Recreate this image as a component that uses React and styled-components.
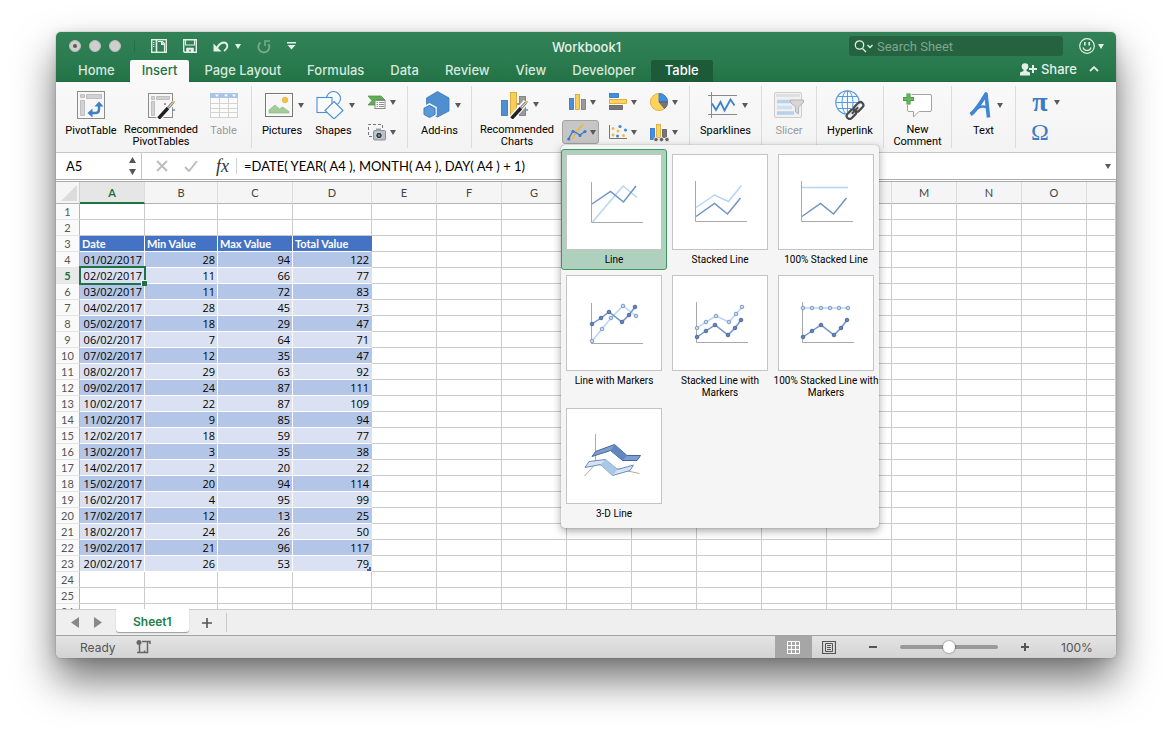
import React, { useState } from 'react';
import styled, { createGlobalStyle, css } from 'styled-components';

const GlobalStyle = createGlobalStyle`
  * {
    box-sizing: border-box;
  }
  body {
    margin: 0;
    background: #fff;
    font-family: Inter, Roboto, sans-serif;
    font-size: 11px;
    color: #000;
  }
  button, input {
    font: inherit;
    color: inherit;
    border: 0;
    padding: 0;
    background: none;
  }
  svg {
    display: block;
    flex: none;
  }
`;

/* ---------- data ---------- */

const tabs = ['Home', 'Insert', 'Page Layout', 'Formulas', 'Data', 'Review', 'View', 'Developer', 'Table'];

/* the last column has no name or width: it fills what is left of the sheet */
const columns = [
  ['A', 65], ['B', 73], ['C', 75], ['D', 79], ['E', 65], ['F', 65], ['G', 65], ['H', 65], ['I', 65], ['J', 65],
  ['K', 65], ['L', 65], ['M', 65], ['N', 65], ['O', 65], [''],
];

const headings = ['Date', 'Min Value', 'Max Value', 'Total Value'];

const values = [
  [28, 94], [11, 66], [11, 72], [28, 45], [18, 29], [7, 64], [12, 35], [29, 63], [24, 87], [22, 87],
  [9, 85], [18, 59], [3, 35], [2, 20], [20, 94], [4, 95], [12, 13], [24, 26], [21, 96], [26, 53],
];

const records = values.map(([min, max], i) => [
  `${String(i + 1).padStart(2, '0')}/02/2017`, min, max, min + max,
]);

const rowNumbers = Array.from({ length: 26 }, (_, i) => i + 1);

const lineCharts = [
  {
    name: 'Line',
    axis: 'M25.5 28V68.5H77',
    light: [[26.5, 68], [57, 32], [71, 43.5]],
    dark: [[26, 50], [44.5, 37.5], [57.5, 48], [70, 32]],
  },
  {
    name: 'Stacked Line',
    axis: 'M23.5 27V67.5H75',
    light: [[24, 53.5], [42.5, 41], [56.5, 47.5], [69.5, 31.5]],
    dark: [[24, 62.5], [42.5, 49.5], [55.5, 60], [68.5, 44]],
  },
  {
    name: '100% Stacked Line',
    axis: 'M23.5 27V67.5H75',
    light: [[24, 33.5], [70, 33.5]],
    dark: [[24, 62.5], [42.5, 49.5], [55.5, 60], [68.5, 44]],
  },
  {
    name: 'Line with Markers',
    markers: true,
    axis: 'M25.5 28V68.5H77',
    light: [[26, 66], [36, 54], [45, 43], [57, 31], [70, 41]],
    dark: [[26, 49], [35, 43], [43, 37], [56, 47], [63, 40], [69, 32]],
  },
  {
    name: 'Stacked Line with Markers',
    markers: true,
    axis: 'M24.5 27V67.5H76',
    light: [[25, 53], [34, 47], [44, 41], [57, 47], [64, 39], [70, 32]],
    dark: [[25, 62], [34, 56], [43, 50], [56, 60], [63, 53], [69, 45]],
  },
  {
    name: '100% Stacked Line with Markers',
    markers: true,
    axis: 'M24.5 27V67.5H76',
    light: [[25, 33], [34, 33], [43, 33], [52, 33], [61, 33], [70, 33]],
    dark: [[25, 62], [34, 56], [43, 50], [56, 60], [63, 53], [69, 45]],
  },
  { name: '3-D Line', solid: true },
];

/* ---------- icons ---------- */

const Caret = ({ color = '#5a5a5a' }) => (
  <svg width="6" height="5" viewBox="0 0 6 5"><path d="M0 0H6L3 5Z" fill={color} /></svg>
);

const Wand = () => (
  <g>
    <path d="M10 29L25 12" stroke="#fff" strokeWidth="6" />
    <path d="M10.5 28.5L20 18" stroke="#222" strokeWidth="3.4" />
    <path d="M20 18L25 12.5" stroke="#888" strokeWidth="3" />
    <path d="M20.5 17.5L25 12.5" stroke="#eee" strokeWidth="1" />
    <rect x="16" y="13" width="2" height="2" fill="#e07a7a" />
    <rect x="25" y="11" width="2" height="2" fill="#f0bd45" />
    <rect x="25" y="19" width="2" height="2" fill="#7aa9e0" />
  </g>
);

const PivotIcon = () => (
  <svg width="28" height="28" viewBox="0 0 28 28" fill="none">
    <rect x="0.5" y="0.5" width="27" height="27" fill="#f7f7f7" stroke="#8c8c8c" />
    <path d="M3.5 3.5H7.5V6.5H3.5ZM9.5 3.5H24.5V7.5H9.5ZM3.5 9.5H7.5V24.5H3.5Z" fill="#d2d2d2" stroke="#b5b5b5" strokeWidth="0.8" />
    <path d="M14 22H18.5Q22 22 22 18.5V15" stroke="#3f7fc4" strokeWidth="2.4" />
    <path d="M10.5 22L15.5 17.5V26.5ZM22 10.5L17.5 15.5H26.5Z" fill="#3f7fc4" />
  </svg>
);

const PivotWandIcon = () => (
  <svg width="28" height="28" viewBox="0 0 28 28" fill="none">
    <rect x="1.5" y="2.5" width="24" height="24" fill="#f7f7f7" stroke="#8c8c8c" />
    <path d="M4.5 5.5H7.5V8.5H4.5ZM9.5 5.5H22.5V8.5H9.5ZM4.5 10.5H7.5V24.5H4.5Z" fill="#d2d2d2" stroke="#b5b5b5" strokeWidth="0.8" />
    <g transform="translate(1 -1)"><Wand /></g>
  </svg>
);

const TableIcon = () => (
  <svg width="28" height="28" viewBox="0 0 28 28" fill="none">
    <rect x="0.5" y="2.5" width="27" height="24" fill="#fbfbfb" stroke="#d3d3d3" />
    <rect y="2" width="28" height="5" fill="#a9c4e6" />
    <path d="M5 3.5H9L7 6ZM14 3.5H18L16 6ZM22 3.5H26L24 6Z" fill="#fff" />
    <path d="M0 12.5H28M0 17.5H28M0 21.5H28M9.5 7V26M18.5 7V26" stroke="#d3d3d3" />
  </svg>
);

const PictureIcon = () => (
  <svg width="28" height="28" viewBox="0 0 28 28" fill="none">
    <rect x="0.5" y="2.5" width="27" height="23" fill="#fff" stroke="#777" />
    <rect x="2" y="4" width="24" height="20" fill="#f7f7f7" />
    <circle cx="20" cy="9" r="2.8" fill="#f3c246" stroke="#dba72c" strokeWidth="0.6" />
    <path d="M4 22V19L10 14L14.5 18L17.5 16L24 20.5V22Z" fill="#a4cc98" stroke="#7db572" strokeWidth="0.6" />
  </svg>
);

const ShapesIcon = () => (
  <svg width="28" height="28" viewBox="0 0 28 28" fill="#fbfbfb" stroke="#4a90d9" strokeWidth="1.1">
    <circle cx="17.5" cy="7.5" r="7" />
    <rect x="1" y="6.5" width="15" height="15" />
    <path d="M18 10.5L27 19.5L18 28L9 19.5Z" />
  </svg>
);

const SmartArtIcon = () => (
  <svg width="20" height="16" viewBox="0 0 20 16" fill="none">
    <path d="M1 2H14L18 6H9V11H1L5 6.5Z" fill="#5fae55" stroke="#3f9440" strokeWidth="0.7" />
    <rect x="8" y="6.5" width="10" height="8" fill="#fff" stroke="#888" />
    <path d="M12 8.5H17M12 10.5H17M12 12.5H17M9.5 8.5H11M9.5 10.5H11M9.5 12.5H11" stroke="#777" strokeWidth="0.8" />
  </svg>
);

const ScreenshotIcon = () => (
  <svg width="20" height="18" viewBox="0 0 20 18" fill="none">
    <path d="M5 13.5H1.5V1.5H15.5V5" stroke="#777" strokeDasharray="3 2" />
    <rect x="6.5" y="7.5" width="12" height="9.5" rx="1" fill="#b9bfc8" stroke="#8a8f98" />
    <rect x="9" y="5.5" width="5" height="2.5" fill="#9aa0a8" />
    <circle cx="12" cy="12.5" r="3.2" fill="#333" stroke="#eee" strokeWidth="0.8" />
    <circle cx="12" cy="12.5" r="1.2" fill="#6f93bd" />
  </svg>
);

const AddinsIcon = () => (
  <svg width="28" height="28" viewBox="0 0 28 28" stroke="#3a78bd" strokeWidth="0.8">
    <path d="M15.5 0.5L27 7V20L15.5 26L4.5 20V7Z" fill="#4f8fd0" />
    <path d="M7.5 13L14 16.5V24L7.5 27.5L1 24V16.5Z" fill="#4f8fd0" stroke="#f4f4f4" strokeWidth="1.6" />
    <path d="M7.5 14.5L13 17.5V23.5L7.5 26.5L2 23.5V17.5Z" fill="#5b9ad8" />
  </svg>
);

const ChartWandIcon = () => (
  <svg width="28" height="28" viewBox="0 0 28 28" fill="none" strokeWidth="0.8">
    <rect x="1.5" y="9.5" width="6" height="15" fill="#4f8fd0" stroke="#3a72b0" />
    <rect x="10.5" y="1.5" width="6" height="23" fill="#f7cf57" stroke="#cfa02c" />
    <rect x="19.5" y="5.5" width="6" height="19" fill="#9a9a9a" stroke="#777" />
    <g transform="translate(1 -1)"><Wand /></g>
  </svg>
);

const ColumnIcon = () => (
  <svg width="20" height="18" viewBox="0 0 20 18" strokeWidth="0.8">
    <rect x="2.5" y="5.5" width="4" height="11" fill="#4f8fd0" stroke="#3a72b0" />
    <rect x="8.5" y="1.5" width="4" height="15" fill="#f7cf57" stroke="#cfa02c" />
    <rect x="14.5" y="6.5" width="4" height="10" fill="#9a9a9a" stroke="#777" />
  </svg>
);

const BarIcon = () => (
  <svg width="20" height="18" viewBox="0 0 20 18" strokeWidth="0.8">
    <rect x="1.5" y="0.5" width="9" height="4" fill="#418ee6" stroke="#2e72c0" />
    <rect x="1.5" y="6.5" width="17" height="4" fill="#ffd25c" stroke="#d9a62e" />
    <rect x="1.5" y="12.5" width="13" height="4" fill="#777" stroke="#5c5c5c" />
  </svg>
);

const PieIcon = () => (
  <svg width="20" height="18" viewBox="0 0 20 18" strokeWidth="0.8">
    <circle cx="10" cy="9" r="8.6" fill="#ffd25c" stroke="#d9a62e" />
    <path d="M10 9V0.4A8.6 8.6 0 0 1 18.6 9Z" fill="#418ee6" stroke="#2e72c0" />
    <path d="M10 9H18.6A8.6 8.6 0 0 1 15.5 15.6Z" fill="#777" stroke="#5c5c5c" />
  </svg>
);

const LineIcon = () => (
  <svg width="20" height="18" viewBox="0 0 20 18" fill="none">
    <path d="M6 14.5L10 8L15.5 2" stroke="#e0b040" strokeWidth="1.2" />
    <path d="M1.5 16L6 8L13 12L18 8.5" stroke="#3a7bc8" strokeWidth="1.4" />
    <g fill="#f0bf48"><circle cx="6" cy="14.5" r="1.4" /><circle cx="10" cy="7.5" r="1.4" /><circle cx="15.5" cy="2" r="1.5" /></g>
    <g fill="#3a7bc8"><circle cx="1.8" cy="16" r="1.6" /><circle cx="6" cy="8.5" r="1.5" /><circle cx="13" cy="12.5" r="1.5" /><circle cx="18" cy="8.5" r="1.6" /></g>
  </svg>
);

const ScatterIcon = () => (
  <svg width="20" height="18" viewBox="0 0 20 18" fill="none">
    <path d="M1.5 2V15.5H19" stroke="#777" />
    <g fill="#eebd48"><circle cx="5" cy="5.5" r="1.5" /><circle cx="10" cy="8" r="1.5" /><circle cx="5" cy="12" r="1.5" /><circle cx="15.5" cy="12.5" r="1.5" /></g>
    <g fill="#4387d6"><circle cx="12" cy="3.5" r="1.6" /><circle cx="17.5" cy="7" r="1.6" /><circle cx="9.5" cy="13" r="1.5" /></g>
  </svg>
);

const ComboIcon = () => (
  <svg width="20" height="20" viewBox="0 0 20 20" strokeWidth="0.8">
    <rect x="1.5" y="6.5" width="4" height="11" fill="#418ee6" stroke="#2e72c0" />
    <rect x="7.5" y="2.5" width="4" height="13" fill="#ffd25c" stroke="#d9a62e" />
    <rect x="13.5" y="7.5" width="4" height="8" fill="#777" stroke="#5c5c5c" />
    <g fill="#666" stroke="#f4f4f4"><circle cx="7" cy="17.5" r="2.2" /><circle cx="12.5" cy="17.5" r="2.2" /><circle cx="18" cy="17.5" r="2.2" /></g>
  </svg>
);

const SparkIcon = () => (
  <svg width="29" height="28" viewBox="0 0 29 28" fill="none">
    <path d="M3.5 1V27M0 4.5H29M0 23.5H29" stroke="#8a8a8a" />
    <path d="M4 12.5L8 19L12.5 11L16.5 19.5L22.5 8.5L26.5 14.5" stroke="#3b82cc" strokeWidth="1.8" />
  </svg>
);

const SlicerIcon = () => (
  <svg width="30" height="28" viewBox="0 0 30 28" fill="none">
    <rect x="0.5" y="1.5" width="27" height="25" rx="1.5" fill="#f1f1f1" stroke="#cdcdcd" />
    <path d="M2 3H26V6H2Z" fill="#e0e0e0" />
    <path d="M3 10.5H20M3 22H20" stroke="#b9d0ec" strokeWidth="3.5" />
    <path d="M3 16.5H18" stroke="#cfdff2" strokeWidth="3.5" />
    <path d="M16.5 9H29.5V11.5L24.5 16V23L21.5 21V16L16.5 11.5Z" fill="#d6d6d6" stroke="#b4b4b4" />
  </svg>
);

const LinkIcon = () => (
  <svg width="30" height="30" viewBox="0 0 30 30" fill="none">
    <circle cx="12.5" cy="12.5" r="11.7" fill="#f3f9ff" stroke="#5b9ce0" strokeWidth="1.2" />
    <ellipse cx="12.5" cy="12.5" rx="5.5" ry="11.7" stroke="#5b9ce0" />
    <path d="M12.5 1V24M1 12.5H24M3 6.5H22M3 18.5H22" stroke="#5b9ce0" />
    <g transform="translate(20 20.5) rotate(-45)">
      <path d="M-12 -4H12V4H-12Z" fill="#f5f5f5" opacity="0.8" />
      <rect x="-10.5" y="-3" width="11" height="6" rx="3" stroke="#4a4a4a" strokeWidth="2.2" />
      <rect x="-0.5" y="-3" width="11" height="6" rx="3" stroke="#4a4a4a" strokeWidth="2.2" />
      <path d="M-4.5 0H4.5" stroke="#4a4a4a" strokeWidth="2" />
    </g>
  </svg>
);

const CommentIcon = () => (
  <svg width="30" height="28" viewBox="0 0 30 28" fill="none">
    <path d="M6 3.5H27Q28.5 3.5 28.5 5V19Q28.5 20.5 27 20.5H16L10.5 26V20.5H6Q4.5 20.5 4.5 19V5Q4.5 3.5 6 3.5Z" fill="#fff" stroke="#a3a3a3" />
    <path d="M5.5 1V14M-1 7.5H12" stroke="#f5f5f5" strokeWidth="6" />
    <path d="M5.5 2.5V13.5M0 8H11" stroke="#3f9440" strokeWidth="4" />
    <path d="M5.5 3V13M0.5 8H10.5" stroke="#68b85e" strokeWidth="2.4" />
  </svg>
);

const TextIcon = () => (
  <svg width="24" height="28" viewBox="0 0 24 28" fill="none" stroke="#3f86d4" strokeWidth="3.6" strokeLinejoin="round">
    <path d="M2.5 23.5Q8 20 18 3L20.5 26.5" />
    <path d="M9 17.5Q13 14 19.5 16.5" strokeWidth="2.6" />
  </svg>
);

const SidebarIcon = () => (
  <svg width="16" height="14" viewBox="0 0 16 14" fill="none" stroke="#e3f0e8">
    <rect x="0.7" y="0.7" width="14.6" height="12.6" strokeWidth="1.4" />
    <path d="M5.5 1V13" strokeWidth="1.6" />
    <path d="M2 3.5H3.5M2 5.5H3.5M2 7.5H3.5" strokeWidth="0.9" />
    <path d="M7 2.5H11.5L13.5 4.5V13" strokeWidth="1.2" />
    <path d="M10 2V6H14Z" fill="#e3f0e8" stroke="none" />
  </svg>
);

const SaveIcon = () => (
  <svg width="14" height="14" viewBox="0 0 14 14" fill="none" stroke="#e3f0e8">
    <path d="M0.7 0.7H13.3V13.3H1.5L0.7 12.5Z" strokeWidth="1.4" />
    <path d="M2.5 1V6H11.5V1" strokeWidth="1.2" />
    <path d="M3.5 9H10.5V13H8V10.5H6V13H3.5Z" fill="#e3f0e8" strokeWidth="0.6" />
  </svg>
);

const UndoIcon = () => (
  <svg width="16" height="13" viewBox="0 0 16 13" fill="none" stroke="#e3f0e8">
    <path d="M4 8Q7 2.5 11 2.5Q14.5 3 14.3 6.5Q14 9 11 11" strokeWidth="1.9" />
    <path d="M0.5 3.5V11.5H8.5Z" fill="#e3f0e8" stroke="none" />
  </svg>
);

const RedoIcon = () => (
  <svg width="14" height="15" viewBox="0 0 14 15" fill="none" stroke="#78ab8e" strokeWidth="1.8">
    <path d="M3.5 3.5A5.5 5.5 0 1 0 11.5 5" />
    <path d="M8 7V2H13" strokeWidth="1.6" />
  </svg>
);

const CustomizeIcon = () => (
  <svg width="9" height="8" viewBox="0 0 9 8" fill="#e3f0e8"><path d="M0 0H9V1.5H0ZM0.5 3H8.5L4.5 7.5Z" /></svg>
);

const SearchIcon = () => (
  <svg width="19" height="13" viewBox="0 0 19 13" fill="none" stroke="#e3f0e8" strokeWidth="1.3">
    <circle cx="5.5" cy="5" r="4.2" />
    <path d="M8.5 8.5L12 12M13.5 5L16 7.5L18.5 5" />
  </svg>
);

const SmileIcon = () => (
  <svg width="16" height="16" viewBox="0 0 16 16" fill="none" stroke="#e3f0e8" strokeWidth="1.2">
    <circle cx="8" cy="8" r="7.3" />
    <path d="M4 9.5Q5 12.5 8 12.5Q11 12.5 12 9.5" />
    <path d="M5.8 4V7.5M10.2 4V7.5" strokeWidth="1.6" />
  </svg>
);

const ShareIcon = () => (
  <svg width="17" height="13" viewBox="0 0 17 13" fill="#e3f0e8">
    <circle cx="5" cy="3.5" r="3.3" />
    <path d="M3.5 6H6.5V8L10 9.5V12.5H0V9.5L3.5 8Z" />
    <path d="M12 2H14V5H17V7H14V10H12V7H9V5H12Z" />
  </svg>
);

const GridIcon = () => (
  <svg width="13" height="13" viewBox="0 0 13 13" fill="none" stroke="#fff">
    <path d="M0.5 0.5H12.5V12.5H0.5ZM4.5 0V13M8.5 0V13M0 4.5H13M0 8.5H13" />
  </svg>
);

const PageIcon = () => (
  <svg width="14" height="13" viewBox="0 0 14 13" fill="none" stroke="#555">
    <path d="M0.5 0.5H13.5V12.5H0.5Z" strokeWidth="1.2" />
    <path d="M3.5 2.5H10.5V10.5H3.5ZM5 4.5H9M5 6.5H9M5 8.5H9" />
  </svg>
);

const MacroIcon = () => (
  <svg width="15" height="14" viewBox="0 0 15 14" fill="none" stroke="#666" strokeWidth="1.5">
    <circle cx="3" cy="2.5" r="2.5" fill="#666" stroke="none" />
    <path d="M6 1.5H14V4M11.5 2V12.5H8.5M1 12.5H8.5V10.5M3.5 5V12" />
  </svg>
);

const pathOf = (points) => 'M' + points.map((p) => p.join(' ')).join('L');

const ChartPreview = ({ chart }) => {
  if (chart.solid) {
    return (
      <svg width="94" height="94" viewBox="1 1 94 94" strokeLinejoin="round">
        <path d="M29.5 26V56L18.5 68M29.5 56L73.5 65.5" fill="none" stroke="#aaa" />
        <path d="M26 48.5L29.5 43.5L48.5 36.5L61 47.5H74.5L71 52.5H56.5L44.5 42.5Z" fill="#7b9fd2" stroke="#476599" />
        <path d="M48.5 36.5L61 47.5L56.5 52.5L44.5 42.5Z" fill="#5f86bd" />
        <path d="M19 59.5L23 53.5L39.5 51.5L51.5 61.5L67.5 57L64 62.5L46.5 67.5L34.5 56.5Z" fill="#d3e4f6" stroke="#7089b8" />
        <path d="M39.5 51.5L51.5 61.5L46.5 67.5L34.5 56.5Z" fill="#a9c7e6" />
      </svg>
    );
  }
  return (
    <svg width="94" height="94" viewBox="1 1 94 94" fill="none">
      <path d={chart.axis} stroke="#a9a9a9" />
      <path d={pathOf(chart.light)} stroke="#b7d5f2" strokeWidth="1.5" />
      {chart.markers && chart.light.map(([x, y]) => (
        <circle key={x} cx={x} cy={y} r="1.8" fill="#c3dbf5" stroke="#7f9bc6" />
      ))}
      <path d={pathOf(chart.dark)} stroke="#6f93c8" strokeWidth="1.5" />
      {chart.markers && chart.dark.map(([x, y]) => (
        <circle key={x} cx={x} cy={y} r="1.8" fill="#6485bb" stroke="#4c6ba3" />
      ))}
    </svg>
  );
};

/* ---------- app ---------- */

const Tool = ({ icon, label, width, caret, disabled }) => (
  <ToolButton $width={width} disabled={disabled}>
    <IconRow $caret={caret}>
      {icon}
      {caret && <Caret />}
    </IconRow>
    <span>{label}</span>
  </ToolButton>
);

const SmallTool = ({ icon, label, noCaret }) => (
  <SmallButton aria-label={label}>
    {icon}
    {!noCaret && <Caret />}
  </SmallButton>
);

const Ribbon = () => {
  const [chosen, setChosen] = useState('Line');

  return (
    <RibbonBar>
      <Group>
        <Tool width={70} icon={<PivotIcon />} label="PivotTable" />
        <Tool width={70} icon={<PivotWandIcon />} label="Recommended PivotTables" />
        <Tool width={55} icon={<TableIcon />} label="Table" disabled />
      </Group>
      <Group>
        <Tool width={60} icon={<PictureIcon />} label="Pictures" caret />
        <Tool width={43} icon={<ShapesIcon />} label="Shapes" caret />
        <SmallGrid $columns={1}>
          <SmallTool icon={<SmartArtIcon />} label="SmartArt" />
          <SmallTool icon={<ScreenshotIcon />} label="Screenshot" />
        </SmallGrid>
      </Group>
      <Group>
        <Tool width={63} icon={<AddinsIcon />} label="Add-ins" caret />
      </Group>
      <Group>
        <Tool width={90} icon={<ChartWandIcon />} label="Recommended Charts" caret />
        <SmallGrid $columns={3}>
          <SmallTool icon={<ColumnIcon />} label="Column" />
          <SmallTool icon={<BarIcon />} label="Bar" />
          <SmallTool icon={<PieIcon />} label="Pie" />
          <MenuAnchor>
            <SmallButton $active aria-label="Line" aria-expanded="true">
              <LineIcon />
              <Caret />
            </SmallButton>
            <Gallery>
              {lineCharts.map((chart) => (
                <GalleryItem key={chart.name} $selected={chart.name === chosen} onClick={() => setChosen(chart.name)}>
                  <Thumb><ChartPreview chart={chart} /></Thumb>
                  <ChartName>{chart.name}</ChartName>
                </GalleryItem>
              ))}
            </Gallery>
          </MenuAnchor>
          <SmallTool icon={<ScatterIcon />} label="Scatter" />
          <SmallTool icon={<ComboIcon />} label="Combo" />
        </SmallGrid>
      </Group>
      <Group>
        <Tool width={71} icon={<SparkIcon />} label="Sparklines" caret />
      </Group>
      <Group>
        <Tool width={54} icon={<SlicerIcon />} label="Slicer" disabled />
      </Group>
      <Group>
        <Tool width={66} icon={<LinkIcon />} label="Hyperlink" />
      </Group>
      <Group>
        <Tool width={67} icon={<CommentIcon />} label="New Comment" />
      </Group>
      <Group>
        <Tool width={63} icon={<TextIcon />} label="Text" caret />
      </Group>
      <Group>
        <SymbolGrid $columns={1}>
          <SmallTool icon={<Symbol $bold>π</Symbol>} label="Equation" />
          <SmallTool icon={<Symbol>Ω</Symbol>} label="Symbol" noCaret />
        </SymbolGrid>
      </Group>
    </RibbonBar>
  );
};

const Sheet = () => (
  <SheetArea>
    <Grid>
      <colgroup>
        <Col $width={24} />
        {columns.map(([name, width]) => <Col key={name} $width={width} />)}
      </colgroup>
      <thead>
        <tr>
          <Corner aria-label="Select all">
            <svg width="16" height="16" viewBox="0 0 16 16"><path d="M16 0V16H0Z" fill="#dcdcdc" /></svg>
          </Corner>
          {columns.map(([name]) => <ColumnHead key={name} scope="col" $active={name === 'A'}>{name}</ColumnHead>)}
        </tr>
      </thead>
      <tbody>
        {rowNumbers.map((row) => (
          <tr key={row}>
            <RowHead scope="row" $active={row === 5}>{row}</RowHead>
            {columns.map(([name], c) => {
              if (c > 3 || row < 3 || row > 23) return <Cell key={name} />;
              if (row === 3) return <HeadingCell key={name} $last={c === 3}>{headings[c]}</HeadingCell>;
              return (
                <ValueCell key={name} $band={row % 2 === 0} $last={c === 3}>
                  {records[row - 4][c]}
                  {row === 5 && c === 0 && <Selection />}
                  {row === 23 && c === 3 && <TableCorner />}
                </ValueCell>
              );
            })}
          </tr>
        ))}
      </tbody>
    </Grid>
  </SheetArea>
);

const App = () => {
  const [zoom, setZoom] = useState(100);

  return (
    <Desktop>
      <GlobalStyle />
      <Window>
        <header>
          <TitleBar>
            <QuickAccess>
              <Lights><Light $edited /><Light /><Light /></Lights>
              <QuickButton aria-label="Sidebar"><SidebarIcon /></QuickButton>
              <QuickButton aria-label="Save"><SaveIcon /></QuickButton>
              <QuickButton aria-label="Undo"><UndoIcon /><Caret color="#e3f0e8" /></QuickButton>
              <QuickButton aria-label="Redo"><RedoIcon /></QuickButton>
              <QuickButton aria-label="Customize"><CustomizeIcon /></QuickButton>
            </QuickAccess>
            <Title>Workbook1</Title>
            <TitleEnd>
              <SearchBox>
                <SearchIcon />
                <input type="search" aria-label="Search Sheet" placeholder="Search Sheet" />
              </SearchBox>
              <QuickButton aria-label="Feedback" $tight><SmileIcon /><Caret color="#e3f0e8" /></QuickButton>
            </TitleEnd>
          </TitleBar>
          <TabBar>
            {tabs.map((tab) => (
              <Tab key={tab} $active={tab === 'Insert'} $context={tab === 'Table'}>{tab}</Tab>
            ))}
            <ShareButton><ShareIcon />Share</ShareButton>
            <CollapseButton aria-label="Collapse ribbon">
              <svg width="10" height="6" viewBox="0 0 10 6"><path d="M1 5L5 1.2L9 5" fill="none" stroke="#e3f0e8" strokeWidth="1.8" /></svg>
            </CollapseButton>
          </TabBar>
        </header>

        <Ribbon />

        <FormulaBar>
          <NameBox>
            <input aria-label="Name box" defaultValue="A5" />
            <svg width="7" height="18" viewBox="0 0 7 18" fill="#555"><path d="M3.5 0L7 6H0ZM0 12H7L3.5 18Z" /></svg>
          </NameBox>
          <FormulaActions>
            <button aria-label="Cancel">
              <svg width="12" height="12" viewBox="0 0 12 12"><path d="M1 1L11 11M11 1L1 11" stroke="#bdbdbd" strokeWidth="2" /></svg>
            </button>
            <button aria-label="Enter">
              <svg width="14" height="12" viewBox="0 0 14 12"><path d="M1 7L5 11L13 1" fill="none" stroke="#bdbdbd" strokeWidth="2" /></svg>
            </button>
            <Fx aria-label="Insert function">fx</Fx>
          </FormulaActions>
          <FormulaInput aria-label="Formula" defaultValue="=DATE( YEAR( A4 ), MONTH( A4 ), DAY( A4 ) + 1)" />
          <ExpandButton aria-label="Expand formula bar"><Caret /></ExpandButton>
        </FormulaBar>

        <Sheet />

        <SheetBar>
          <SheetNav aria-label="Previous sheet">
            <svg width="8" height="11" viewBox="0 0 8 11"><path d="M8 0V11L0 5.5Z" fill="#888" /></svg>
          </SheetNav>
          <SheetNav aria-label="Next sheet">
            <svg width="8" height="11" viewBox="0 0 8 11"><path d="M0 0V11L8 5.5Z" fill="#888" /></svg>
          </SheetNav>
          <SheetTab>Sheet1</SheetTab>
          <AddSheet aria-label="Add sheet">
            <svg width="10" height="10" viewBox="0 0 10 10"><path d="M5 0V10M0 5H10" stroke="#555" strokeWidth="1.6" /></svg>
          </AddSheet>
        </SheetBar>

        <StatusBar>
          <span>Ready</span>
          <MacroButton aria-label="Record macro"><MacroIcon /></MacroButton>
          <ViewButton $active aria-label="Normal view"><GridIcon /></ViewButton>
          <ViewButton aria-label="Page layout view"><PageIcon /></ViewButton>
          <ZoomButton aria-label="Zoom out" onClick={() => setZoom(zoom - 10)}>
            <svg width="10" height="10" viewBox="0 0 10 10"><path d="M1 5H9" stroke="#555" strokeWidth="2" /></svg>
          </ZoomButton>
          <ZoomSlider type="range" min="0" max="200" value={zoom} aria-label="Zoom" onChange={(e) => setZoom(Number(e.target.value))} />
          <ZoomButton aria-label="Zoom in" onClick={() => setZoom(zoom + 10)}>
            <svg width="10" height="10" viewBox="0 0 10 10"><path d="M1 5H9M5 1V9" stroke="#555" strokeWidth="2" /></svg>
          </ZoomButton>
          <ZoomValue>{zoom}%</ZoomValue>
        </StatusBar>
      </Window>
    </Desktop>
  );
};

export default App;

/* ---------- styles ---------- */

const Desktop = styled.div`
  padding: 32px 56px 80px;
`;

const Window = styled.main`
  display: flex;
  flex-direction: column;
  height: calc(100vh - 112px);
  min-height: 420px;
  border-radius: 5px;
  background: #fff;
  box-shadow: 0 0 1px rgba(0, 0, 0, 0.6), 0 22px 40px rgba(0, 0, 0, 0.55), 0 2px 12px rgba(0, 0, 0, 0.12);
`;

const TitleBar = styled.div`
  display: grid;
  grid-template-columns: 1fr auto 1fr;
  align-items: center;
  height: 28px;
  padding: 0 12px 0 13px;
  border-radius: 5px 5px 0 0;
  background: linear-gradient(#328157, #2b7b50);
`;

const QuickAccess = styled.div`
  display: flex;
  align-items: center;
  gap: 16px;
`;

const Lights = styled.div`
  display: flex;
  gap: 8px;
  padding-right: 13px;
  border-right: 1px solid #266f47;
`;

const Light = styled.span`
  display: flex;
  align-items: center;
  justify-content: center;
  width: 12px;
  height: 12px;
  border-radius: 50%;
  background: #cfcfcf;
  border: 1px solid #b9bdb9;
  ${({ $edited }) => $edited && css`
    &::after {
      content: '';
      width: 4px;
      height: 4px;
      border-radius: 50%;
      background: #5a5a5a;
    }
  `}
`;

const QuickButton = styled.button`
  display: flex;
  align-items: center;
  gap: ${({ $tight }) => ($tight ? '3px' : '6px')};
`;

const Title = styled.h1`
  margin: 0;
  padding-top: 2px;
  font-size: 13px;
  font-weight: 500;
  line-height: 26px;
  color: #e6f1ea;
`;

const TitleEnd = styled.div`
  display: flex;
  align-items: center;
  justify-content: flex-end;
  gap: 16px;
`;

const SearchBox = styled.label`
  display: flex;
  align-items: center;
  gap: 4px;
  width: 214px;
  height: 20px;
  padding: 0 5px;
  border-radius: 3px;
  background: #25623f;
  color: #e6f1ea;
  input {
    flex: 1;
    min-width: 0;
    padding-top: 1px;
    font-family: Roboto, sans-serif;
    font-size: 13px;
    line-height: 19px;
    outline: none;
  }
  input::placeholder {
    color: #7fa68e;
    opacity: 1;
  }
`;

const TabBar = styled.nav`
  display: flex;
  align-items: stretch;
  gap: 4px;
  height: 22px;
  padding: 0 17px 0 11px;
  background: linear-gradient(#2b7b50, #237346);
  border-bottom: 1px solid #1f6b41;
`;

const Tab = styled.button`
  height: 22px;
  padding: 0 11px 2px;
  border-radius: 2px 2px 0 0;
  font-size: 13px;
  font-weight: 500;
  color: #d7e8de;
  white-space: nowrap;
  ${({ $active }) => $active && css`
    padding: 0 12px 2px;
    background: #f9f9f9;
    color: #237346;
  `}
  ${({ $context }) => $context && css`
    padding: 0 14px 2px;
    background: #1d5a38;
    color: #fff;
  `}
`;

const ShareButton = styled.button`
  display: flex;
  align-items: center;
  gap: 4px;
  margin-left: auto;
  padding-bottom: 3px;
  font-size: 13px;
  font-weight: 500;
  color: #e3f0e8;
`;

const CollapseButton = styled.button`
  display: flex;
  align-items: center;
  padding: 0 0 3px 8px;
`;

const RibbonBar = styled.section`
  display: flex;
  height: 71px;
  background: linear-gradient(#f9f9f9, #f3f3f3);
  border-bottom: 1px solid #c9c9c9;
  font-family: Roboto, sans-serif;
  font-size: 11px;
`;

const Group = styled.div`
  display: flex;
  margin: 4px 0;
  border-right: 1px solid #dcdcdc;
  &:last-child {
    border-right: 0;
  }
`;

const ToolButton = styled.button`
  display: flex;
  flex-direction: column;
  align-items: center;
  justify-content: flex-start;
  width: ${({ $width }) => $width}px;
  padding-top: 3px;
  line-height: 12px;
  text-align: center;
  &:disabled {
    color: #9a9a9a;
  }
`;

const IconRow = styled.span`
  display: flex;
  align-items: center;
  gap: 5px;
  height: 32px;
  margin-bottom: 4px;
  padding-left: ${({ $caret }) => ($caret ? '4px' : '0')};
`;

const SmallGrid = styled.div`
  display: grid;
  grid-template-columns: repeat(${({ $columns }) => $columns}, 37px);
  grid-auto-rows: 24px;
  gap: 6px 4px;
  align-content: start;
  padding: 4px 8px 0 ${({ $columns }) => ($columns > 1 ? '0' : '7px')};
`;

const SymbolGrid = styled(SmallGrid)`
  padding-left: 8px;
`;

const SmallButton = styled.button`
  display: flex;
  align-items: center;
  gap: 3px;
  width: 37px;
  height: 24px;
  padding-left: 4px;
  border: 1px solid transparent;
  border-radius: 3px;
  ${({ $active }) => $active && css`
    background: #c6c6c6;
    border-color: #a2a2a2;
  `}
`;

const Symbol = styled.span`
  flex: none;
  width: 22px;
  font-family: 'Liberation Serif', serif;
  font-size: ${({ $bold }) => ($bold ? '28px' : '24px')};
  font-weight: ${({ $bold }) => ($bold ? 700 : 400)};
  line-height: 22px;
  color: #3b7cc4;
`;

const MenuAnchor = styled.div`
  position: relative;
`;

const Gallery = styled.div`
  position: absolute;
  z-index: 2;
  top: 25px;
  left: -1px;
  display: grid;
  grid-template-columns: repeat(3, 106px);
  align-items: start;
  padding: 4px 0;
  border-radius: 4px;
  background: #f5f5f5;
  box-shadow: 0 0 1px rgba(0, 0, 0, 0.5), 0 3px 8px rgba(0, 0, 0, 0.35);
`;

const GalleryItem = styled.button`
  display: flex;
  flex-direction: column;
  align-items: center;
  gap: 4px;
  padding: 4px 0 3px;
  border: 1px solid transparent;
  border-radius: 3px;
  font-size: 10px;
  line-height: 12px;
  text-align: center;
  ${({ $selected }) => $selected && css`
    background: #b0d0be;
    border-color: #3d9764;
  `}
`;

const Thumb = styled.span`
  width: 96px;
  height: 96px;
  border: 1px solid #c4c4c4;
  background: #fff;
`;

/* long names may run slightly past the item on both sides */
const ChartName = styled.span`
  margin: 0 -3px;
`;

const FormulaBar = styled.div`
  display: flex;
  height: 29px;
  border-bottom: 3px double #ababab;
  background: #fff;
  font-family: Lato, Carlito, sans-serif;
`;

const NameBox = styled.div`
  display: flex;
  align-items: center;
  width: 86px;
  padding: 0 5px 0 10px;
  border-right: 1px solid #c4c4c4;
  font-size: 13px;
  input {
    flex: 1;
    min-width: 0;
  }
`;

const FormulaActions = styled.div`
  display: flex;
  align-items: center;
  gap: 16px;
  padding: 0 7px 0 14px;
  margin: 5px 0;
  border-right: 1px solid #d4d4d4;
`;

const Fx = styled.button`
  padding-left: 2px;
  font-family: 'Liberation Serif', serif;
  font-size: 18px;
  font-style: italic;
  line-height: 16px;
  color: #333;
`;

const FormulaInput = styled.input`
  flex: 1;
  min-width: 0;
  padding-left: 7px;
  font-size: 13px;
`;

const ExpandButton = styled.button`
  padding: 0 5px;
`;

const SheetArea = styled.div`
  flex: 1;
  min-height: 0;
  overflow: hidden;
  background: #fff;
`;

const Grid = styled.table`
  width: 100%;
  table-layout: fixed;
  border-collapse: separate;
  border-spacing: 0;
  font-family: Lato, Carlito, sans-serif;
  font-size: 11px;
  line-height: 15px;
`;

const Col = styled.col`
  width: ${({ $width }) => ($width ? `${$width}px` : 'auto')};
`;

const Corner = styled.td`
  height: 22px;
  padding: 0 2px 0 5px;
  background: #f5f5f5;
  border-right: 1px solid #d0d0d0;
  border-bottom: 1px solid #b4b4b4;
`;

const ColumnHead = styled.th`
  height: 22px;
  padding: 0;
  font-weight: ${({ $active }) => ($active ? 700 : 400)};
  color: ${({ $active }) => ($active ? '#1f7244' : '#444')};
  background: ${({ $active }) => ($active ? '#e6e6e6' : '#f5f5f5')};
  border-right: 1px solid #dcdcdc;
  border-bottom: ${({ $active }) => ($active ? '2px solid #1f7244' : '1px solid #b4b4b4')};
`;

const RowHead = styled.th`
  height: 16px;
  padding: 0;
  font-weight: ${({ $active }) => ($active ? 700 : 400)};
  color: ${({ $active }) => ($active ? '#1f7244' : '#555')};
  background: ${({ $active }) => ($active ? '#e9e9e9' : '#fafafa')};
  border-right: 1px solid #b4b4b4;
  border-bottom: 1px solid #e4e4e4;
`;

const Cell = styled.td`
  height: 16px;
  padding: 0;
  border-right: 1px solid #cbcbcb;
  border-bottom: 1px solid #cbcbcb;
`;

const HeadingCell = styled(Cell)`
  padding-left: 2px;
  font-weight: 700;
  color: #fff;
  background: #4472c4;
  border-color: ${({ $last }) => ($last ? 'transparent' : '#fff')};
  border-bottom-color: #fff;
  white-space: nowrap;
`;

const ValueCell = styled(Cell)`
  position: relative;
  padding-right: 2px;
  font-family: 'Open Sans', sans-serif;
  font-weight: 500;
  text-align: right;
  background: ${({ $band }) => ($band ? '#b4c6e7' : '#d9e1f2')};
  border-color: ${({ $last }) => ($last ? 'transparent' : '#fff')};
  border-bottom-color: #fff;
`;

const Selection = styled.span`
  position: absolute;
  z-index: 1;
  inset: -2px -2px -2px -1px;
  border: 2px solid #217346;
  &::after {
    content: '';
    position: absolute;
    right: -3px;
    bottom: -3px;
    width: 5px;
    height: 5px;
    background: #217346;
    border: 1px solid #fff;
    border-width: 1px 0 0 1px;
  }
`;

const TableCorner = styled.span`
  position: absolute;
  right: 0;
  bottom: 0;
  width: 4px;
  height: 4px;
  border: solid #3f5fae;
  border-width: 0 2px 2px 0;
`;

const SheetBar = styled.div`
  display: flex;
  height: 26px;
  padding-left: 7px;
  background: #efefef;
  border-top: 1px solid #cbcbcb;
`;

const SheetNav = styled.button`
  display: flex;
  align-items: center;
  justify-content: center;
  width: 23px;
`;

const SheetTab = styled.button`
  height: 23px;
  margin: -1px 0 0 7px;
  padding: 1px 17px 0;
  background: #fff;
  border-radius: 0 0 3px 3px;
  box-shadow: 0 1px 1px rgba(0, 0, 0, 0.35);
  font-size: 12px;
  font-weight: 600;
  color: #237f4b;
`;

const AddSheet = styled.button`
  display: flex;
  align-items: center;
  justify-content: center;
  width: 38px;
  margin: 3px 0;
  border-right: 1px solid #cbcbcb;
`;

const StatusBar = styled.footer`
  display: flex;
  align-items: center;
  height: 23px;
  padding-left: 24px;
  border-top: 1px solid #a3a3a3;
  border-radius: 0 0 5px 5px;
  background: linear-gradient(#e4e4e4, #d3d3d3);
  font-size: 12px;
  color: #555;
`;

const MacroButton = styled.button`
  margin-left: 20px;
  margin-right: auto;
`;

const ViewButton = styled.button`
  display: flex;
  align-items: center;
  align-self: stretch;
  padding: 0 ${({ $active }) => ($active ? '12px' : '10px')};
  background: ${({ $active }) => ($active ? '#a6a6a6' : 'none')};
`;

const ZoomButton = styled.button`
  margin: 0 22px;
`;

const ZoomSlider = styled.input`
  appearance: none;
  width: 98px;
  height: 4px;
  margin: 0;
  border-radius: 2px;
  background: #999;
  &::-webkit-slider-thumb {
    appearance: none;
    width: 12px;
    height: 12px;
    border-radius: 50%;
    background: #fff;
    box-shadow: 0 0 1px 1px rgba(0, 0, 0, 0.2);
  }
`;

const ZoomValue = styled.output`
  width: 64px;
  padding-left: 9px;
`;
